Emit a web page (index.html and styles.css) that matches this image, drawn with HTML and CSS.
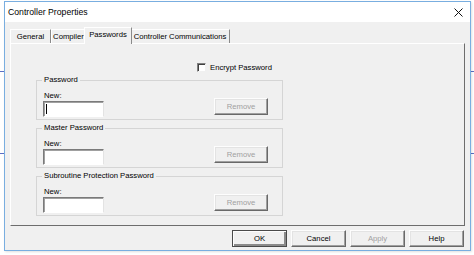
FILE: index.html
```html
<!DOCTYPE html>
<html lang="en">
  <head>
    <meta charset="UTF-8" />
    <title>Controller Properties</title>
    <link rel="stylesheet" href="styles.css">
  </head>
  <body>
    <div class="window">
      <div class="titlebar">
        <span class="title">Controller Properties</span>
        <svg class="close" width="9" height="9" viewBox="0 0 9 9">
          <path d="M0.5 0.5 L8.5 8.5 M8.5 0.5 L0.5 8.5" stroke="#111" stroke-width="1" />
        </svg>
      </div>
      <div class="content">
        <div class="tabs">
          <div class="tab tab-general">General</div>
          <div class="tab tab-compiler">Compiler</div>
          <div class="tab tab-passwords active">Passwords</div>
          <div class="tab tab-comms">Controller Communications</div>
        </div>
        <div class="panel">
          <label class="encrypt">
            <span class="checkbox"></span>
            Encrypt Password
          </label>

          <div class="group">
            <span class="group-title">Password</span>
            <div class="field">
              <span class="field-label">New:</span>
              <div class="textbox"><span class="caret"></span></div>
            </div>
            <button class="btn remove" disabled>Remove</button>
          </div>

          <div class="group">
            <span class="group-title">Master Password</span>
            <div class="field">
              <span class="field-label">New:</span>
              <div class="textbox"></div>
            </div>
            <button class="btn remove" disabled>Remove</button>
          </div>

          <div class="group">
            <span class="group-title">Subroutine Protection Password</span>
            <div class="field">
              <span class="field-label">New:</span>
              <div class="textbox"></div>
            </div>
            <button class="btn remove" disabled>Remove</button>
          </div>
        </div>

        <div class="actions">
          <button class="btn default">OK</button>
          <button class="btn">Cancel</button>
          <button class="btn" disabled>Apply</button>
          <button class="btn">Help</button>
        </div>
      </div>
    </div>
  </body>
</html>
```

FILE: styles.css
```css
* {
  margin: 0;
  padding: 0;
  box-sizing: border-box;
  font-family: "Liberation Sans", Arial, sans-serif;
}
body {
  width: 474px;
  height: 255px;
  overflow: hidden;
  background:
    linear-gradient(#5b6fc4, #5b6fc4) 0 71px / 100% 1px no-repeat,
    linear-gradient(#5b6fc4, #5b6fc4) 0 153px / 100% 1px no-repeat,
    #ffffff;
  font-size: 7.7px;
  color: #000;
}
.window {
  margin: 1px 0 0 4px;
  width: 467px;
  height: 250px;
  border: 1px solid #79aee0;
  background: #f0f0f0;
  display: flex;
  flex-direction: column;
  box-shadow: 1px 1px 2px rgba(0, 0, 0, 0.12);
}
.titlebar {
  height: 20px;
  background: #fff;
  display: flex;
  align-items: center;
  justify-content: space-between;
  padding: 0 7px 0 3px;
}
.title {
  font-size: 8.7px;
}
.close {
  margin-top: 1px;
}
.content {
  flex: 1;
  padding: 5px 5px 0 5px;
  display: flex;
  flex-direction: column;
}

/* tabs */
.tabs {
  display: flex;
  align-items: flex-end;
  height: 16px;
}
.tab {
  height: 14px;
  border: 1px solid;
  border-color: #fff #8a8a8a transparent #fff;
  border-bottom: none;
  text-align: center;
  line-height: 13px;
  white-space: nowrap;
}
.tab-general {
  width: 41px;
}
.tab-compiler {
  width: 35px;
}
.tab-passwords {
  width: 44px;
}
.tab-comms {
  width: 100px;
}
.tab.active {
  width: 48px;
  height: 17px;
  margin: 0 -2px -1px;
  background: #f0f0f0;
  position: relative;
  z-index: 1;
  line-height: 14px;
}

.panel {
  height: 183px;
  border: 1px solid;
  border-color: #fff #6d6d6d #6d6d6d #fff;
  padding: 18px 0 0 25px;
}
.encrypt {
  display: flex;
  align-items: center;
  height: 11px;
  padding-left: 161px;
  gap: 4px;
}
.checkbox {
  width: 9px;
  height: 9px;
  background: #fff;
  border: 1px solid;
  border-color: #808080 #f0f0f0 #f0f0f0 #808080;
  box-shadow: inset 1px 1px 0 #404040;
}

/* group boxes */
.group {
  position: relative;
  width: 247px;
  height: 40px;
  margin-top: 8px;
  border: 1px solid #d5d5d5;
  padding: 10px 14px 2px 6px;
  display: flex;
  justify-content: space-between;
  align-items: flex-end;
}
.encrypt + .group {
  margin-top: 7px;
}
.group-title {
  position: absolute;
  top: -6px;
  left: 5px;
  padding: 0 2px;
  background: #f0f0f0;
  line-height: 10px;
}
.field {
  display: flex;
  flex-direction: column;
}
.field-label {
  line-height: 10px;
  padding-left: 1px;
}
.textbox {
  width: 61px;
  height: 16px;
  background: #fff;
  border: 1px solid;
  border-color: #7a7a7a #e3e3e3 #fff #7a7a7a;
  box-shadow: inset 1px 1px 0 #a0a0a0;
  padding: 2px 0 0 2px;
}
.caret {
  display: block;
  width: 1px;
  height: 10px;
  background: #000;
}

/* buttons */
.btn {
  width: 55px;
  height: 17px;
  background: #f0f0f0;
  border: 1px solid;
  border-color: #fdfdfd #696969 #696969 #fdfdfd;
  box-shadow: inset -1px -1px 0 #a0a0a0, inset 1px 1px 0 #e3e3e3;
  font-size: 7.7px;
  color: #000;
}
.btn:disabled {
  color: #a0a0a0;
}
.btn.remove {
  width: 54px;
  margin-bottom: 2px;
}
.btn.default {
  border-color: #4a4a4a;
  box-shadow: inset 1px 1px 0 #fdfdfd, inset -2px -2px 0 #8a8a8a;
}
.actions {
  display: flex;
  justify-content: flex-end;
  gap: 4px;
  margin-top: 4px;
  padding-right: 1px;
}
```
